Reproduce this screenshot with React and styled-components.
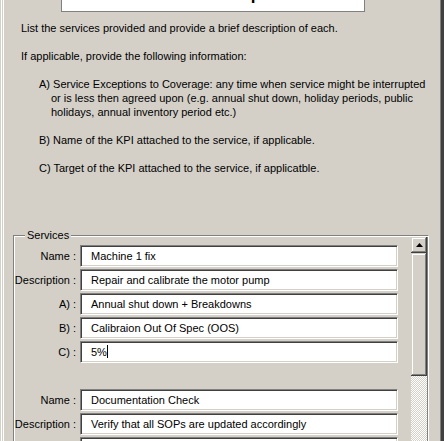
import React from "react";
import styled, { createGlobalStyle } from "styled-components";

const Global = createGlobalStyle`
  html, body { margin: 0; padding: 0; background: #d4d0c8; }
  body { font-family: "Liberation Sans", Arial, sans-serif; }
`;

const Frame = styled.div`
  position: relative;
  width: 444px;
  height: 441px;
  overflow: hidden;
  background: #d4d0c8;
  box-sizing: border-box;
  display: flex;
  flex-direction: column;
  box-shadow: inset 1px 0 0 #d4d0c8, inset 2px 0 0 #ffffff, inset 3px 0 0 #d4d0c8,
    inset 4px 0 0 #ffffff, inset -3px 0 0 #404040, inset -4px 0 0 #808080;
  font-family: "Liberation Sans", Arial, sans-serif;
  font-size: 11px;
  color: #000;
`;

const Header = styled.div`
  margin-left: 61px;
  width: 304px;
  height: 12px;
  box-sizing: border-box;
  background: #fff;
  border: 1px solid #808080;
  border-top: none;
  overflow: hidden;
  display: flex;
  justify-content: center;
  align-items: flex-start;
  flex-shrink: 0;
`;

const HeaderTitle = styled.span`
  font-size: 17px;
  line-height: 17px;
  font-weight: bold;
  margin-top: -14px;
  white-space: nowrap;
`;

const Instructions = styled.div`
  padding: 9px 0 0 21px;
  display: flex;
  flex-direction: column;
  gap: 14px;
  line-height: 14px;
  flex-shrink: 0;
`;

const Para = styled.div`
  white-space: nowrap;
`;

const Item = styled.div`
  padding-left: 18px;
  white-space: nowrap;
`;

const Line = styled.span`
  display: block;
  padding-left: ${(p) => (p.$cont ? 12 : 0)}px;
`;

const GroupBox = styled.div`
  position: relative;
  margin: 60px 0 0 13px;
  width: 416px;
  box-sizing: border-box;
  border-top: 1px solid #808080;
  border-left: 1px solid #808080;
  border-right: 1px solid #ffffff;
  box-shadow: inset 1px 1px 0 #ffffff, inset -1px 0 0 #808080;
  display: flex;
  flex: 1;
  min-height: 0;
`;

const Legend = styled.span`
  position: absolute;
  top: -8px;
  left: 11px;
  padding: 0 2px;
  background: #d4d0c8;
  line-height: 14px;
`;

const Rows = styled.div`
  width: 384px;
  padding-top: 9px;
  display: grid;
  grid-template-columns: 63px 318px;
  column-gap: 3px;
  row-gap: 2px;
  grid-auto-rows: 22px;
  align-content: start;
`;

const Label = styled.div`
  text-align: right;
  padding-right: 1px;
  line-height: 22px;
  white-space: nowrap;
`;

const Field = styled.div`
  box-sizing: border-box;
  height: 22px;
  background: #fff;
  border-top: 1px solid #808080;
  border-left: 1px solid #808080;
  border-right: 1px solid #fff;
  border-bottom: 1px solid #fff;
  box-shadow: inset 1px 1px 0 #404040, inset -1px -1px 0 #d4d0c8;
  padding-left: 10px;
  line-height: 20px;
  white-space: nowrap;
  overflow: hidden;
`;

const Spacer = styled.div`
  grid-column: 1 / span 2;
`;

const Caret = styled.span`
  display: inline-block;
  width: 1px;
  height: 13px;
  background: #000;
  vertical-align: -2px;
`;

const ScrollBar = styled.div`
  margin-left: 13px;
  margin-top: 1px;
  width: 16px;
  display: flex;
  flex-direction: column;
`;

const Raised = styled.div`
  box-sizing: border-box;
  width: 16px;
  height: ${(p) => p.$h}px;
  background: #d4d0c8;
  box-shadow: inset -1px -1px 0 #404040, inset 1px 1px 0 #d4d0c8,
    inset -2px -2px 0 #808080, inset 2px 2px 0 #ffffff;
  display: flex;
  align-items: center;
  justify-content: center;
  flex-shrink: 0;
`;

const Track = styled.div`
  flex: 1;
  background: repeating-conic-gradient(#ffffff 0 25%, #d4d0c8 0 50%) 0 0 / 2px 2px;
`;

const rowsData = [
  [
    ["Name :", "Machine 1 fix"],
    ["Description :", "Repair and calibrate the motor pump"],
    ["A) :", "Annual shut down + Breakdowns"],
    ["B) :", "Calibraion Out Of Spec (OOS)"],
    ["C) :", "5%", true],
  ],
  [
    ["Name :", "Documentation Check"],
    ["Description :", "Verify that all SOPs are updated accordingly"],
    ["A) :", ""],
    ["B) :", ""],
    ["C) :", ""],
  ],
];

export default function App() {
  return (
    <>
      <Global />
      <Frame>
        <Header>
          <HeaderTitle>Service Description</HeaderTitle>
        </Header>
        <Instructions>
          <Para>List the services provided and provide a brief description of each.</Para>
          <Para>If applicable, provide the following information:</Para>
          <Item>
            <Line>A) Service Exceptions to Coverage: any time when service might be interrupted</Line>
            <Line $cont>or is less then agreed upon (e.g. annual shut down, holiday periods, public</Line>
            <Line $cont>holidays, annual inventory period etc.)</Line>
          </Item>
          <Item>B) Name of the KPI attached to the service, if applicable.</Item>
          <Item>C) Target of the KPI attached to the service, if applicatble.</Item>
        </Instructions>
        <GroupBox>
          <Legend>Services</Legend>
          <Rows>
            {rowsData.map((group, gi) => (
              <React.Fragment key={gi}>
                {gi > 0 && <Spacer />}
                {group.map(([label, value, caret], i) => (
                  <React.Fragment key={i}>
                    <Label>{label}</Label>
                    <Field>
                      {value}
                      {caret && <Caret />}
                    </Field>
                  </React.Fragment>
                ))}
              </React.Fragment>
            ))}
          </Rows>
          <ScrollBar>
            <Raised $h={16}>
              <svg width="7" height="4" viewBox="0 0 7 4">
                <path d="M3.5 0 L7 4 L0 4 Z" fill="#000" />
              </svg>
            </Raised>
            <Raised $h={123} />
            <Track />
          </ScrollBar>
        </GroupBox>
      </Frame>
    </>
  );
}
